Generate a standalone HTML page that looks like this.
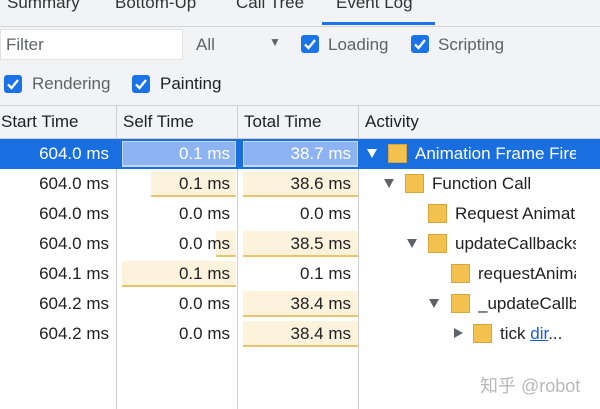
<!DOCTYPE html>
<html><head><meta charset="utf-8"><style>
*{margin:0;padding:0;box-sizing:border-box}
body{width:600px;height:409px;overflow:hidden;background:#fff;font-family:"Liberation Sans",Arial,sans-serif;font-size:17px;color:#202124;position:relative}
.abs{position:absolute;white-space:nowrap}
.top{position:absolute;left:0;top:0;width:600px;height:105px;background:#f1f3f4}
.tab{position:absolute;top:-7px;font-size:17px;color:#333}
.cb{position:absolute;width:18px;height:18px;border-radius:3px;background:#1a73e8}
.cb svg{position:absolute;left:2px;top:2px}
.hdr{position:absolute;left:0;top:105px;width:600px;height:34px;background:#f1f3f4;border-top:1px solid #d0d0d0;border-bottom:1px solid #d0d0d0}
.vl{position:absolute;top:105px;width:1px;height:304px;background:#cfcfcf}
.row{position:absolute;left:0;width:600px;height:30px}
.t{position:absolute;top:5px;text-align:right}
.bar{position:absolute;top:2px;height:26px;background:#fdf2dc;border-bottom:2px solid #e8c46a}
.sq{position:absolute;top:5px;width:19px;height:19px;background:#f2c14e;border:1px solid #d9a43c}
.tri{position:absolute;top:10px;width:0;height:0;border-left:5px solid transparent;border-right:5px solid transparent;border-top:9px solid #5f6368}
.trir{position:absolute;top:9px;width:0;height:0;border-top:5px solid transparent;border-bottom:5px solid transparent;border-left:9px solid #5f6368}
</style></head><body>
<div class="top"></div>
<div class="tab" style="left:7px">Summary</div>
<div class="tab" style="left:115px">Bottom-Up</div>
<div class="tab" style="left:236px">Call Tree</div>
<div class="tab" style="left:336px">Event Log</div>
<div class="abs" style="left:322px;top:22px;width:113px;height:3px;background:#1a73e8"></div>
<div class="abs" style="left:0;top:26px;width:600px;height:1px;background:#d6d6d6"></div>
<div class="abs" style="left:0;top:29px;width:183px;height:31px;background:#fff;border:1px solid #e3e3e3"></div>
<div class="abs" style="left:6px;top:35px;color:#5f6368">Filter</div>
<div class="abs" style="left:196px;top:35px;color:#5f6368">All</div>
<div class="abs" style="left:269px;top:35px;font-size:12px;color:#5f6368">▼</div>
<div class="cb" style="left:301px;top:35px"><svg width="14" height="14"><path d="M2 7.5L5.5 11L12 3" stroke="#fff" stroke-width="2.3" fill="none"/></svg></div>
<div class="abs" style="left:328px;top:35px;color:#5f6368">Loading</div>
<div class="cb" style="left:411px;top:35px"><svg width="14" height="14"><path d="M2 7.5L5.5 11L12 3" stroke="#fff" stroke-width="2.3" fill="none"/></svg></div>
<div class="abs" style="left:438px;top:35px;color:#5f6368">Scripting</div>
<div class="cb" style="left:4px;top:75px"><svg width="14" height="14"><path d="M2 7.5L5.5 11L12 3" stroke="#fff" stroke-width="2.3" fill="none"/></svg></div>
<div class="abs" style="left:32px;top:74px;color:#5f6368">Rendering</div>
<div class="cb" style="left:132px;top:75px"><svg width="14" height="14"><path d="M2 7.5L5.5 11L12 3" stroke="#fff" stroke-width="2.3" fill="none"/></svg></div>
<div class="abs" style="left:160px;top:74px;color:#202124">Painting</div>
<div class="hdr"></div>
<div class="abs" style="left:1px;top:112px">Start Time</div>
<div class="abs" style="left:123px;top:112px">Self Time</div>
<div class="abs" style="left:244px;top:112px">Total Time</div>
<div class="abs" style="left:365px;top:112px">Activity</div>
<div class="vl" style="left:116px"></div><div class="vl" style="left:237px"></div><div class="vl" style="left:358px"></div>

<div class="row" style="top:139px;background:#1a6fe0;color:#fff">
<div class="bar" style="left:122px;width:114px;background:#8db3f2;border:1px solid #c5d8f8;border-bottom:2px solid #c5d8f8"></div>
<div class="bar" style="left:243px;width:115px;background:#8db3f2;border:1px solid #c5d8f8;border-bottom:2px solid #c5d8f8"></div>
<div class="t" style="left:0;width:109px">604.0 ms</div>
<div class="t" style="left:116px;width:114px">0.1 ms</div>
<div class="t" style="left:237px;width:114px">38.7 ms</div>
<div class="tri" style="left:367px;border-top-color:#fff"></div>
<div class="sq" style="left:388px"></div>
<div class="abs" style="left:415px;top:5px;width:161px;overflow:hidden">Animation Frame Fired</div>
</div>

<div class="row" style="top:169px">
<div class="bar" style="left:151px;width:85px"></div><div class="bar" style="left:243px;width:115px"></div>
<div class="t" style="left:0;width:109px">604.0 ms</div><div class="t" style="left:116px;width:114px">0.1 ms</div><div class="t" style="left:237px;width:114px">38.6 ms</div>
<div class="tri" style="left:384px"></div><div class="sq" style="left:405px"></div>
<div class="abs" style="left:432px;top:5px">Function Call</div></div>

<div class="row" style="top:199px">
<div class="t" style="left:0;width:109px">604.0 ms</div><div class="t" style="left:116px;width:114px">0.0 ms</div><div class="t" style="left:237px;width:114px">0.0 ms</div>
<div class="sq" style="left:428px"></div>
<div class="abs" style="left:455px;top:5px;width:121px;overflow:hidden">Request Animation Frame</div></div>

<div class="row" style="top:229px">
<div class="bar" style="left:216px;width:20px"></div><div class="bar" style="left:243px;width:115px"></div>
<div class="t" style="left:0;width:109px">604.0 ms</div><div class="t" style="left:116px;width:114px">0.0 ms</div><div class="t" style="left:237px;width:114px">38.5 ms</div>
<div class="tri" style="left:407px"></div><div class="sq" style="left:428px"></div>
<div class="abs" style="left:455px;top:5px;width:121px;overflow:hidden">updateCallbacks</div></div>

<div class="row" style="top:259px">
<div class="bar" style="left:122px;width:114px"></div>
<div class="t" style="left:0;width:109px">604.1 ms</div><div class="t" style="left:116px;width:114px">0.1 ms</div><div class="t" style="left:237px;width:114px">0.1 ms</div>
<div class="sq" style="left:451px"></div>
<div class="abs" style="left:478px;top:5px;width:98px;overflow:hidden">requestAnimationFrame</div></div>

<div class="row" style="top:289px">
<div class="bar" style="left:243px;width:115px"></div>
<div class="t" style="left:0;width:109px">604.2 ms</div><div class="t" style="left:116px;width:114px">0.0 ms</div><div class="t" style="left:237px;width:114px">38.4 ms</div>
<div class="tri" style="left:429px"></div><div class="sq" style="left:451px"></div>
<div class="abs" style="left:478px;top:5px;width:98px;overflow:hidden">_updateCallbacks</div></div>

<div class="row" style="top:319px">
<div class="bar" style="left:243px;width:115px"></div>
<div class="t" style="left:0;width:109px">604.2 ms</div><div class="t" style="left:116px;width:114px">0.0 ms</div><div class="t" style="left:237px;width:114px">38.4 ms</div>
<div class="trir" style="left:454px"></div><div class="sq" style="left:473px"></div>
<div class="abs" style="left:500px;top:5px">tick <span style="color:#1a5fd0;text-decoration:underline">dir</span>...</div></div>

<div class="abs" style="left:480px;top:372px;color:#b8b8b8;font-family:'Liberation Sans','Noto Sans CJK SC',sans-serif;font-size:18px">知乎 @robot</div>
</body></html>
